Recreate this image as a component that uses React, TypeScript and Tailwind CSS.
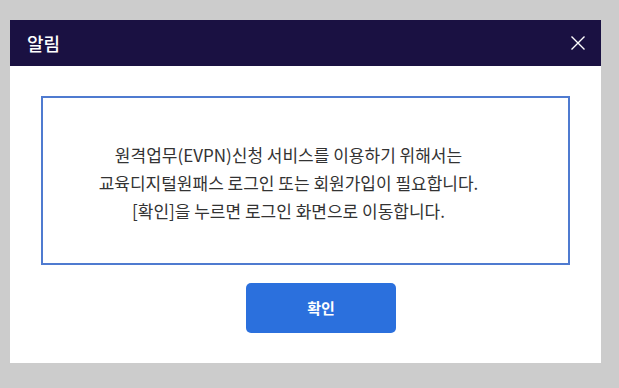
import React from "react";

export default function App() {
  return (
    <div className="w-[619px] h-[388px] bg-[#cccccc] pt-[20px] pl-[10px]" style={{ fontFamily: '"Noto Sans CJK KR", "Noto Sans", sans-serif' }}>
      <div className="w-[591px] h-[343px] bg-white flex flex-col">
        <div className="h-[46px] bg-[#1a1142] flex items-center justify-between pl-[17px] pr-[15px]">
          <span className="text-white text-[18px] font-medium leading-none">알림</span>
          <svg width="16" height="16" viewBox="0 0 16 16" fill="none">
            <path d="M1.5 1.5L14.5 14.5M14.5 1.5L1.5 14.5" stroke="white" strokeWidth="1.4" />
          </svg>
        </div>
        <div className="flex flex-col px-[31px] pt-[30px]">
          <div className="w-full h-[169px] border-2 border-[#4f7bd0] flex flex-col items-center justify-center text-[#333333] text-[17px] leading-[28px] text-center pt-[4px] pr-[34px]">
            <p>원격업무(EVPN)신청 서비스를 이용하기 위해서는</p>
            <p>교육디지털원패스 로그인 또는 회원가입이 필요합니다.</p>
            <p>[확인]을 누르면 로그인 화면으로 이동합니다.</p>
          </div>
          <button className="mt-[18px] ml-[205px] w-[150px] h-[50px] bg-[#2b70dd] rounded-[5px] text-white text-[15px] font-bold">확인</button>
        </div>
      </div>
    </div>
  );
}
